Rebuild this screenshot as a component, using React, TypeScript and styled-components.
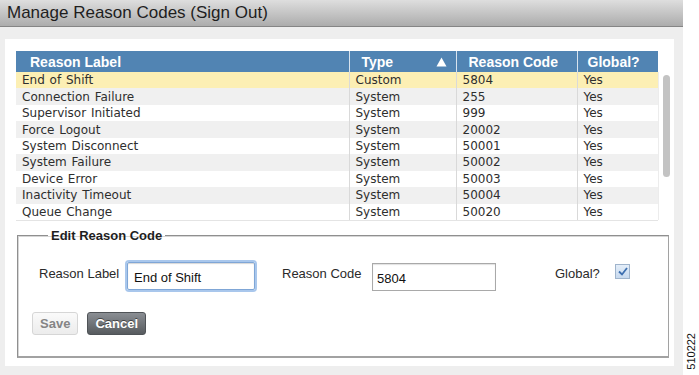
import * as React from "react";
import styled, { createGlobalStyle } from "styled-components";

const GlobalStyle = createGlobalStyle`
  html, body {
    margin: 0;
    padding: 0;
    background: #ffffff;
  }
`;

interface ReasonRow {
  label: string;
  type: string;
  code: string;
  global: string;
}

const rows: ReasonRow[] = [
  { label: "End of Shift", type: "Custom", code: "5804", global: "Yes" },
  { label: "Connection Failure", type: "System", code: "255", global: "Yes" },
  { label: "Supervisor Initiated", type: "System", code: "999", global: "Yes" },
  { label: "Force Logout", type: "System", code: "20002", global: "Yes" },
  { label: "System Disconnect", type: "System", code: "50001", global: "Yes" },
  { label: "System Failure", type: "System", code: "50002", global: "Yes" },
  { label: "Device Error", type: "System", code: "50003", global: "Yes" },
  { label: "Inactivity Timeout", type: "System", code: "50004", global: "Yes" },
  { label: "Queue Change", type: "System", code: "50020", global: "Yes" },
];

const columns = [
  { title: "Reason Label", width: 333, pad: 14 },
  { title: "Type", width: 107, pad: 12 },
  { title: "Reason Code", width: 121, pad: 12 },
  { title: "Global?", width: 81, pad: 10 },
];

const Page = styled.div`
  display: flex;
  width: 699px;
  height: 375px;
  overflow: hidden;
`;

const Window = styled.div`
  width: 683px;
  height: 375px;
  display: flex;
  flex-direction: column;
  background: #eeeeee;
`;

const TitleBar = styled.div`
  height: 27px;
  box-sizing: border-box;
  padding-left: 7px;
  display: flex;
  align-items: center;
  background: linear-gradient(#dedede, #acacac);
  border-bottom: 1px solid #858585;
  font-family: "Liberation Sans", Arial, sans-serif;
  font-size: 17px;
  color: #1e1e1e;
`;

const Body = styled.div`
  flex: 1;
  padding: 12px 9px 9px 5px;
  display: flex;
  min-width: 0;
`;

const Panel = styled.div`
  width: 669px;
  box-sizing: border-box;
  background: #ffffff;
  padding: 12px 2px 0 11px;
  display: flex;
  flex-direction: column;
`;

const ListArea = styled.div`
  display: flex;
  height: 169px;
`;

const Table = styled.table`
  width: 642px;
  border-collapse: collapse;
  table-layout: fixed;
  align-self: flex-start;
`;

const HeadCell = styled.th<{ pad: number }>`
  height: 21px;
  padding: 0 0 0 ${(p) => p.pad}px;
  background: #5184b3;
  color: #ffffff;
  text-align: left;
  font-family: "Liberation Sans", Arial, sans-serif;
  font-weight: bold;
  font-size: 14px;
  border-left: 1px solid #d8e3ee;
  white-space: nowrap;
  &:first-child {
    border-left: none;
  }
`;

const HeadInner = styled.div`
  display: flex;
  justify-content: space-between;
  align-items: center;
  padding-right: 9px;
`;

const Row = styled.tr<{ selected: boolean; odd: boolean }>`
  height: 16.45px;
  background: ${(p) =>
    p.selected ? "#fcefb4" : p.odd ? "#f0f0f0" : "#ffffff"};
  &:last-child td {
    border-bottom: 1px solid #e4e4e4;
  }
`;

const Cell = styled.td`
  padding: 0 0 0 6px;
  font-family: "DejaVu Sans", Verdana, sans-serif;
  font-size: 12px;
  color: #2e2e2e;
  word-spacing: 1px;
  line-height: 16px;
  border-left: 1px solid #d9d9d9;
  white-space: nowrap;
  overflow: hidden;
  &:first-child {
    border-left: none;
  }
`;

const ScrollTrack = styled.div`
  width: 14px;
  margin-top: 21px;
  height: 148px;
  box-sizing: border-box;
  border-left: 1px solid #ececec;
  padding: 3px 2px 0 4px;
`;

const ScrollThumb = styled.div`
  height: 102px;
  border-radius: 4px;
  background: #c3c3c3;
`;

const FieldSet = styled.fieldset`
  margin: 8px 3px 0 1px;
  padding: 19px 0 0 21px;
  height: 108px;
  border: 1px solid #8f8f8f;
  border-right-color: #a2a2a2;
  border-bottom: 2px solid #a2a2a2;
  box-shadow: inset 1px 1px 0 #d6d6d6;
  font-family: "Liberation Sans", Arial, sans-serif;
`;

const Legend = styled.legend`
  margin-left: 9px;
  padding: 0 3px;
  font-weight: bold;
  font-size: 13px;
  color: #1e1e1e;
`;

const FormRow = styled.div`
  display: flex;
  align-items: flex-start;
`;

const FieldLabel = styled.span<{ width: number }>`
  width: ${(p) => p.width}px;
  padding-top: 4px;
  font-size: 13px;
  color: #2a2a2a;
`;

const TextInput = styled.div<{ width: number; focused?: boolean }>`
  width: ${(p) => p.width}px;
  height: 28px;
  box-sizing: border-box;
  margin-top: ${(p) => (p.focused ? 0 : 1)}px;
  margin-right: ${(p) => (p.focused ? 27 : 59)}px;
  padding-left: ${(p) => (p.focused ? 6 : 4)}px;
  display: flex;
  align-items: center;
  padding-top: 3px;
  border: 1px solid ${(p) => (p.focused ? "#7fa6d6" : "#a9a9a9")};
  box-shadow: ${(p) =>
    p.focused
      ? "0 0 0 2px #a9c7ec, inset 0 1px 1px #d7d7d7"
      : "inset 0 1px 1px #e2e2e2"};
  border-radius: ${(p) => (p.focused ? 2 : 0)}px;
  font-size: 13px;
  color: #111111;
`;

const CheckBox = styled.div`
  width: 15px;
  height: 15px;
  margin-top: 2px;
  box-sizing: border-box;
  border: 1px solid #9fb4cc;
  background: linear-gradient(#e4eef9, #c7d9ee);
  display: flex;
  align-items: center;
  justify-content: center;
`;

const ButtonRow = styled.div`
  display: flex;
  gap: 9px;
  margin-top: 21px;
  margin-left: -7px;
`;

const Button = styled.div<{ primary?: boolean }>`
  height: 23px;
  padding: 0 7px;
  box-sizing: border-box;
  display: flex;
  align-items: center;
  border-radius: 3px;
  font-size: 13px;
  font-weight: bold;
  border: 1px solid ${(p) => (p.primary ? "#4f5357" : "#d6d6d6")};
  background: ${(p) =>
    p.primary
      ? "linear-gradient(#8a8e93, #575b5f)"
      : "linear-gradient(#fafafa, #ececec)"};
  color: ${(p) => (p.primary ? "#ffffff" : "#858585")};
  text-shadow: ${(p) => (p.primary ? "0 -1px 0 #444" : "none")};
`;

const SideStrip = styled.div`
  width: 16px;
  display: flex;
  align-items: flex-end;
  justify-content: center;
  padding-bottom: 5px;
  box-sizing: border-box;
`;

const FigureId = styled.span`
  writing-mode: vertical-rl;
  transform: rotate(180deg);
  font-family: "Liberation Sans", Arial, sans-serif;
  font-size: 11px;
  color: #111111;
`;

export default function App() {
  return (
    <Page>
      <GlobalStyle />
      <Window>
        <TitleBar>Manage Reason Codes (Sign Out)</TitleBar>
        <Body>
          <Panel>
            <ListArea>
              <Table>
                <colgroup>
                  {columns.map((c) => (
                    <col key={c.title} style={{ width: c.width }} />
                  ))}
                </colgroup>
                <thead>
                  <tr>
                    {columns.map((c) => (
                      <HeadCell key={c.title} pad={c.pad}>
                        {c.title === "Type" ? (
                          <HeadInner>
                            <span>Type</span>
                            <svg width="11" height="10" viewBox="0 0 11 10">
                              <path d="M5.5 0.5 L10.5 9.5 L0.5 9.5 Z" fill="#ffffff" />
                            </svg>
                          </HeadInner>
                        ) : (
                          c.title
                        )}
                      </HeadCell>
                    ))}
                  </tr>
                </thead>
                <tbody>
                  {rows.map((r, i) => (
                    <Row key={r.label} selected={i === 0} odd={i % 2 === 1}>
                      <Cell>{r.label}</Cell>
                      <Cell>{r.type}</Cell>
                      <Cell>{r.code}</Cell>
                      <Cell>{r.global}</Cell>
                    </Row>
                  ))}
                </tbody>
              </Table>
              <ScrollTrack>
                <ScrollThumb />
              </ScrollTrack>
            </ListArea>
            <FieldSet>
              <Legend>Edit Reason Code</Legend>
              <FormRow>
                <FieldLabel width={88}>Reason Label</FieldLabel>
                <TextInput width={128} focused>
                  End of Shift
                </TextInput>
                <FieldLabel width={90}>Reason Code</FieldLabel>
                <TextInput width={124}>5804</TextInput>
                <FieldLabel width={60}>Global?</FieldLabel>
                <CheckBox>
                  <svg width="10" height="9" viewBox="0 0 10 9">
                    <path
                      d="M1 4.5 L4 7.5 L9 1"
                      fill="none"
                      stroke="#3d6fb0"
                      strokeWidth="1.8"
                    />
                  </svg>
                </CheckBox>
              </FormRow>
              <ButtonRow>
                <Button>Save</Button>
                <Button primary>Cancel</Button>
              </ButtonRow>
            </FieldSet>
          </Panel>
        </Body>
      </Window>
      <SideStrip>
        <FigureId>510222</FigureId>
      </SideStrip>
    </Page>
  );
}
